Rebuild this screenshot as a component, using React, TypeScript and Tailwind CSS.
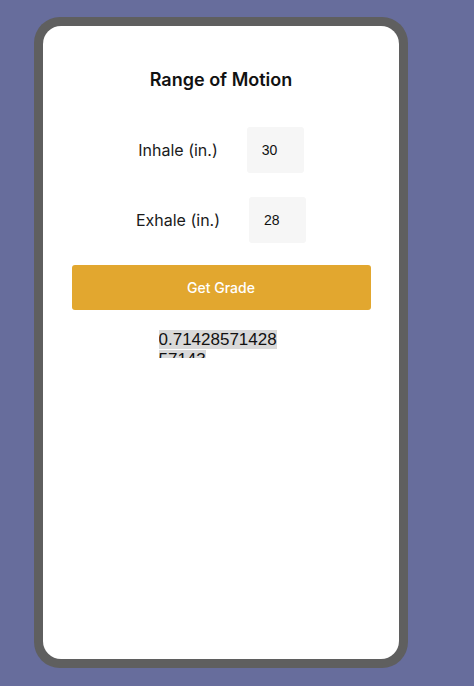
import { useState } from "react";

// 吸気・呼気の値から比率を出すだけの小さな画面
const FONT = { fontFamily: "Inter, 'Noto Sans', sans-serif" };
const ARIAL = { fontFamily: "'Liberation Sans', Arial, sans-serif" };

type Field = { label: string; value: string };

function Row({ label, value, onChange }: Field & { onChange: (v: string) => void }) {
  return (
    <div className="flex items-center justify-center gap-[29px]">
      <span className="text-[16px] text-[#1a1a1a]">{label}</span>
      <input
        value={value}
        onChange={(e) => onChange(e.target.value)}
        className="h-[46px] w-[57px] rounded-[3px] bg-[#f6f6f6] px-[15px] text-[14px] text-[#111] outline-none"
        style={ARIAL}
      />
    </div>
  );
}

export default function App() {
  const [inhale, setInhale] = useState("30");
  const [exhale, setExhale] = useState("28");
  const [grade, setGrade] = useState(String(20 / 28));

  return (
    <div className="flex h-[686px] w-full bg-[#676d9c]" style={FONT}>
      <div className="ml-[34px] mt-[17px] h-[651px] w-[374px] rounded-[26px] bg-[#5f5f5f] p-[9px]">
        <div className="flex h-full flex-col items-center rounded-[18px] bg-white pt-[40px]">
          <h1 className="text-[18px] leading-[27px] font-semibold text-[#111]">Range of Motion</h1>

          <div className="mt-[34px] flex flex-col gap-[24px]">
            <Row label="Inhale (in.)" value={inhale} onChange={setInhale} />
            <Row label="Exhale (in.)" value={exhale} onChange={setExhale} />
          </div>

          <button
            type="button"
            onClick={() => setGrade(String(Number(exhale) / Number(inhale) || 0))}
            className="mt-[22px] h-[45px] w-[299px] rounded-[3px] bg-[#e2a72f] text-[14px] font-medium text-white"
          >
            Get Grade
          </button>

          <div
            className="mt-[20px] h-[28px] w-[125px] overflow-hidden break-all text-[17px] leading-[20px] text-[#111]"
            style={ARIAL}
          >
            <span className="bg-[#d9d9d9]">{grade}</span>
          </div>
        </div>
      </div>
    </div>
  );
}
